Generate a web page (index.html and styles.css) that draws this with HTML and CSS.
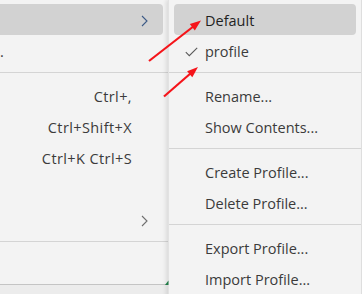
FILE: index.html
```html
<!DOCTYPE html>
<html>
<head>
<meta charset="utf-8">
<link rel="stylesheet" href="styles.css">
</head>
<body>
<div class="stage">
  <div class="menu menu-left">
    <div class="item active">
      <span class="label"></span>
      <span class="key"></span>
      <span class="sub"><svg viewBox="0 0 7 12" width="7" height="12"><path d="M1 1 L6 6 L1 11" fill="none" stroke="#3c5a86" stroke-width="1.1"/></svg></span>
    </div>
    <div class="item"><span class="label tail">.</span><span class="key"></span><span class="sub"></span></div>
    <div class="sep"></div>
    <div class="item"><span class="label"></span><span class="key">Ctrl+,</span><span class="sub"></span></div>
    <div class="item"><span class="label"></span><span class="key">Ctrl+Shift+X</span><span class="sub"></span></div>
    <div class="item"><span class="label"></span><span class="key">Ctrl+K Ctrl+S</span><span class="sub"></span></div>
    <div class="item"><span class="label"></span><span class="key"></span><span class="sub"></span></div>
    <div class="item">
      <span class="label"></span><span class="key"></span>
      <span class="sub"><svg viewBox="0 0 7 12" width="7" height="12"><path d="M1 1 L6 6 L1 11" fill="none" stroke="#6e6e6e" stroke-width="1.1"/></svg></span>
    </div>
    <div class="sep"></div>
    <div class="item"><span class="label"></span><span class="key"></span><span class="sub"></span></div>
  </div>
  <div class="menu menu-right">
    <div class="item active"><span class="check"></span><span class="label">Default</span></div>
    <div class="item"><span class="check"><svg viewBox="0 0 13 10" width="13" height="10"><path d="M0.8 5.2 L4.3 8.7 L12.2 0.8" fill="none" stroke="#5a5a5a" stroke-width="1.1"/></svg></span><span class="label">profile</span></div>
    <div class="sep"></div>
    <div class="item"><span class="check"></span><span class="label">Rename...</span></div>
    <div class="item"><span class="check"></span><span class="label">Show Contents...</span></div>
    <div class="sep"></div>
    <div class="item"><span class="check"></span><span class="label">Create Profile...</span></div>
    <div class="item"><span class="check"></span><span class="label">Delete Profile...</span></div>
    <div class="sep"></div>
    <div class="item"><span class="check"></span><span class="label">Export Profile...</span></div>
    <div class="item"><span class="check"></span><span class="label">Import Profile...</span></div>
  </div>
</div>
<svg class="overlay" width="362" height="294" viewBox="0 0 362 294">
  <polygon points="165,285 168.5,280.5 168.5,285" fill="#1e7a45"/>
  <line x1="149" y1="61" x2="194" y2="26" stroke="#f5141a" stroke-width="2.2"/>
  <polygon points="201,20.5 194.8,30.4 189.8,24.1" fill="#f5141a"/>
  <line x1="164" y1="96.5" x2="191" y2="73" stroke="#f5141a" stroke-width="2.2"/>
  <polygon points="198,67 192.3,77.2 187.1,71.2" fill="#f5141a"/>
</svg>
</body>
</html>
```

FILE: styles.css
```css
html, body {
  margin: 0;
  padding: 0;
}
body {
  width: 362px;
  height: 294px;
  overflow: hidden;
  background: #ececec;
  font-family: "Open Sans", "Noto Sans", sans-serif;
  font-size: 14.5px;
  color: #3b3b3b;
  position: relative;
}
.stage {
  display: flex;
  align-items: flex-start;
}
.menu {
  background: #f3f3f3;
  box-sizing: border-box;
}
.menu-left {
  width: 168px;
  flex: none;
  overflow: hidden;
  border-bottom: 1px solid #c4c4c4;
  padding: 4px 5px 4px 0;
}
.menu-right {
  width: 194px;
  flex: none;
  height: 300px;
  padding: 4px 5px;
  border-left: 1px solid #e2e2e2;
  border-right: 1px solid #dedede;
  box-shadow: -2px 0 4px rgba(0, 0, 0, 0.10);
  position: relative;
  z-index: 1;
}
.item {
  display: flex;
  align-items: center;
  height: 31px;
  line-height: 28px;
  padding-top: 3px;
  box-sizing: border-box;
  border-radius: 4px;
  white-space: nowrap;
}
.menu-left .item {
  border-top-left-radius: 0;
  border-bottom-left-radius: 0;
}
.item.active {
  background: #d2d2d2;
  color: #1f1f1f;
}
.menu-left .label {
  flex: 1;
}
.menu-left .label.tail {
  padding-left: 0;
}
.key {
  text-align: right;
  letter-spacing: 0.4px;
}
.sub {
  width: 31px;
  height: 28px;
  flex: none;
  display: flex;
  align-items: center;
  padding-left: 9px;
  box-sizing: border-box;
}
.sub svg {
  display: block;
}
.check {
  width: 31px;
  height: 28px;
  flex: none;
  display: flex;
  align-items: center;
  padding-left: 11px;
  box-sizing: border-box;
}
.check svg {
  display: block;
}
.sep {
  height: 1px;
  background: #d4d4d4;
  margin: 6px 0 7px;
}
.menu-right .sep {
  margin-left: -5px;
  margin-right: -5px;
}
.menu-left .sep {
  margin-right: -5px;
}
.overlay {
  position: absolute;
  left: 0;
  top: 0;
  pointer-events: none;
  z-index: 5;
}
```
